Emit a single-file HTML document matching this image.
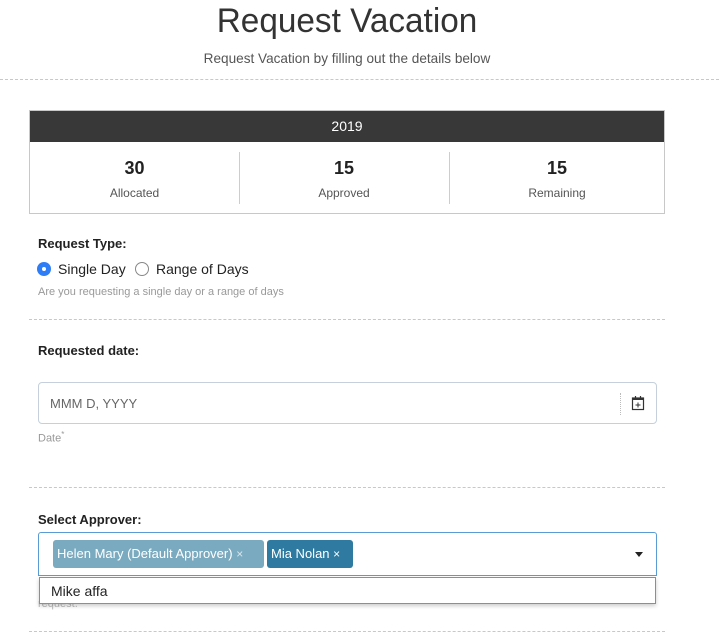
<!DOCTYPE html>
<html><head><style>
*{box-sizing:border-box;margin:0;padding:0}
body{width:719px;height:635px;overflow:hidden;background:#fff;font-family:"Liberation Sans",sans-serif;color:#222;position:relative}
.a{position:absolute}
.dash{position:absolute;border-top:1px dashed #c8c8c8;height:0}
.lbl{position:absolute;left:38px;font-size:13px;font-weight:bold;color:#222}
</style></head><body>
<div class="a" style="left:0;width:694px;top:2px;text-align:center;font-size:34px;color:#333;transform:scaleX(0.98)">Request Vacation</div>
<div class="a" style="left:0;width:694px;top:50px;text-align:center;font-size:14px;color:#555;transform:scaleX(0.97)">Request Vacation by filling out the details below</div>
<div class="dash" style="left:0;width:719px;top:79px"></div>

<div class="a" style="left:29px;top:110px;width:636px;height:104px;border:1px solid #c8c8c8">
 <div style="height:31px;background:#383838;color:#fff;text-align:center;font-size:14px;line-height:31px">2019</div>
 <div class="a" style="left:209px;top:41px;height:52px;border-left:1px solid #c5cfdb"></div>
 <div class="a" style="left:419px;top:41px;height:52px;border-left:1px solid #c5cfdb"></div>
 <div class="a" style="left:0;width:209px;top:47px;text-align:center;font-size:18px;font-weight:bold">30</div>
 <div class="a" style="left:209px;width:210px;top:47px;text-align:center;font-size:18px;font-weight:bold">15</div>
 <div class="a" style="left:419px;width:216px;top:47px;text-align:center;font-size:18px;font-weight:bold">15</div>
 <div class="a" style="left:0;width:209px;top:75px;text-align:center;font-size:12px;color:#555">Allocated</div>
 <div class="a" style="left:209px;width:210px;top:75px;text-align:center;font-size:12px;color:#555">Approved</div>
 <div class="a" style="left:419px;width:216px;top:75px;text-align:center;font-size:12px;color:#555">Remaining</div>
</div>

<div class="lbl" style="top:236px">Request Type:</div>
<div class="a" style="left:37px;top:262px;width:14px;height:14px;border-radius:50%;background:#2f7df6"><div style="position:absolute;left:5px;top:5px;width:4px;height:4px;border-radius:50%;background:#fff"></div></div>
<div class="a" style="left:58px;top:261px;font-size:14px">Single Day</div>
<div class="a" style="left:135px;top:262px;width:14px;height:14px;border-radius:50%;border:1px solid #888"></div>
<div class="a" style="left:156px;top:261px;font-size:14px">Range of Days</div>
<div class="a" style="left:38px;top:286px;font-size:11px;color:#999">Are you requesting a single day or a range of days</div>
<div class="dash" style="left:29px;width:636px;top:319px"></div>

<div class="lbl" style="top:343px">Requested date:</div>
<div class="a" style="left:38px;top:382px;width:619px;height:42px;border:1px solid #c5d0dc;border-radius:4px">
 <div class="a" style="left:11px;top:13px;font-size:13px;color:#666">MMM D, YYYY</div>
 <div class="a" style="left:581px;top:10px;height:22px;border-left:1px dotted #bbb"></div>
 <svg class="a" style="left:592px;top:12px" width="14" height="16" viewBox="0 0 14 16"><rect x="1.5" y="3" width="11" height="11.5" fill="none" stroke="#333" stroke-width="1.2"/><rect x="1.5" y="3" width="11" height="2" fill="#333"/><line x1="4.5" y1="1" x2="4.5" y2="4" stroke="#333" stroke-width="1.2"/><line x1="9.5" y1="1" x2="9.5" y2="4" stroke="#333" stroke-width="1.2"/><line x1="7" y1="7.5" x2="7" y2="12.5" stroke="#333"/><line x1="4.5" y1="10" x2="9.5" y2="10" stroke="#333"/></svg>
</div>
<div class="a" style="left:38px;top:430px;font-size:11px;color:#999">Date<sup style="font-size:8px">*</sup></div>
<div class="dash" style="left:29px;width:636px;top:487px"></div>

<div class="lbl" style="top:512px">Select Approver:</div>
<div class="a" style="left:38px;top:532px;width:619px;height:44px;border:1px solid #5b9bd5;border-radius:3px 3px 0 0">
 <div class="a" style="left:14px;top:7px;width:211px;height:28px;background:#7aaac0;border-radius:3px;color:#fff;font-size:13px;line-height:28px;padding-left:4px;white-space:nowrap;overflow:hidden">Helen Mary (Default Approver) <span style="color:#d8e6ee;font-size:12px">×</span></div>
 <div class="a" style="left:228px;top:7px;width:86px;height:28px;background:#2e7aa1;border-radius:3px;color:#fff;font-size:13px;line-height:28px;padding-left:4px;white-space:nowrap">Mia Nolan <span style="font-size:12px">×</span></div>
 <div class="a" style="left:596px;top:19px;width:0;height:0;border-left:4.5px solid transparent;border-right:4.5px solid transparent;border-top:5px solid #222"></div>
</div>
<div class="a" style="left:38px;top:598px;font-size:11px;color:#bbb">request.</div>
<div class="a" style="left:39px;top:577px;width:617px;height:27px;border:1px solid #5b9bd5;background:#fff;box-shadow:0 2px 4px rgba(0,0,0,0.2)">
 <div class="a" style="left:11px;top:5px;font-size:14px;color:#222">Mike affa</div>
</div>
<div class="dash" style="left:29px;width:636px;top:631px"></div>
</body></html>
